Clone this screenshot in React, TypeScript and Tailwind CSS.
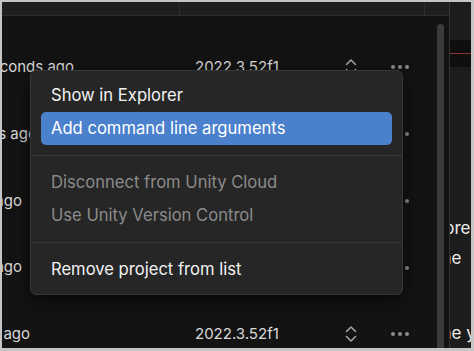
import React from "react";

type Row = {
  time: string;
  timeBox: string;
  version: string;
};

const rows: Row[] = [
  { time: "a few seconds ago", timeBox: "w-[72px]", version: "2022.3.52f1" },
  { time: "2 minutes ago", timeBox: "w-[35px]", version: "2022.3.52f1" },
  { time: "an hour ago", timeBox: "w-[20px]", version: "2022.3.52f1" },
  { time: "2 days ago", timeBox: "w-[20px]", version: "2022.3.52f1" },
  { time: "3 days ago", timeBox: "w-[28px]", version: "2022.3.52f1" },
];

const UpDown = () => (
  <svg width="12" height="18" viewBox="0 0 12 18" fill="none">
    <path
      d="M1.5 6.5 L6 2 L10.5 6.5 M1.5 11.5 L6 16 L10.5 11.5"
      stroke="#a3a3a3"
      strokeWidth="1.6"
      strokeLinecap="round"
      strokeLinejoin="round"
    />
  </svg>
);

const Dots = () => (
  <div className="flex items-center gap-[3px]">
    <span className="w-[4px] h-[4px] rounded-full bg-[#8d8d8d]" />
    <span className="w-[4px] h-[4px] rounded-full bg-[#8d8d8d]" />
    <span className="w-[4px] h-[4px] rounded-full bg-[#8d8d8d]" />
  </div>
);

const MenuItem = ({
  label,
  active,
  disabled,
}: {
  label: string;
  active?: boolean;
  disabled?: boolean;
}) => (
  <div
    className={
      "h-[33px] flex items-center px-[10px] rounded-[5px] text-[16.6px] " +
      (active
        ? "bg-[#4b80cc] text-white"
        : disabled
          ? "text-[#8b8b8b]"
          : "text-[#f2f2f2]")
    }
  >
    {label}
  </div>
);

const ContextMenu = () => (
  <div className="absolute left-[28px] top-[68px] w-[373px] h-[225px] rounded-[6px] border border-[#363636] bg-[#262626] shadow-[0_6px_18px_rgba(0,0,0,0.55)] pt-[8px] pb-[9px]">
    <div className="px-[10px]">
      <MenuItem label="Show in Explorer" />
      <MenuItem label="Add command line arguments" active />
    </div>
    <div className="my-[10px] h-px bg-[#393939]" />
    <div className="px-[10px]">
      <MenuItem label="Disconnect from Unity Cloud" disabled />
      <MenuItem label="Use Unity Version Control" disabled />
    </div>
    <div className="my-[10px] h-px bg-[#393939]" />
    <div className="px-[10px]">
      <MenuItem label="Remove project from list" />
    </div>
  </div>
);

export default function App() {
  return (
    <div
      className="w-[474px] h-[351px] bg-[#c5c5c5] pl-[2px] pt-[2px] pr-[3px] pb-[3px] overflow-hidden"
      style={{ fontFamily: "Inter, 'Noto Sans', sans-serif" }}
    >
      <div className="flex h-full w-full">
        {/* project list */}
        <div className="relative flex flex-col w-[447px] h-full bg-[#131313]">
          <div className="h-[14px] flex border-b border-[#2e2e2e] bg-[#1f1f1f]">
            <div className="w-[178px] border-r border-[#2e2e2e]" />
            <div className="w-[245px] border-r border-[#2e2e2e]" />
            <div className="flex-1" />
          </div>

          <div className="relative flex-1 overflow-hidden pt-[18px]">
            {rows.map((row, i) => (
              <div
                key={i}
                className="h-[66.75px] flex items-center text-[15px] text-[#d9d9d9] whitespace-nowrap"
              >
                <div className="w-[193px]">
                  <div className={"flex justify-end overflow-hidden " + row.timeBox}>
                    <span className="shrink-0">{row.time}</span>
                  </div>
                </div>
                <div className="w-[150px]">{row.version}</div>
                <div className="w-[46px] flex">
                  <UpDown />
                </div>
                <Dots />
              </div>
            ))}

            <div className="absolute right-[5px] top-[8px] bottom-0 w-[7px] rounded-t-full bg-[#3b3b3b]" />
          </div>

          <ContextMenu />
        </div>

        {/* side panel */}
        <div className="flex-1 h-full border-l border-[#343434] bg-[#1c1c1c] overflow-hidden">
          <div className="mt-[38px] h-[27px] bg-[#0f0f0f] flex flex-col justify-center">
            <div className="h-px bg-[#8a3434]" />
          </div>
          <div className="mt-[146px] text-[17px] leading-[30px] text-[#ececec] whitespace-nowrap">
            <div className="ml-[-6px]">press</div>
            <div className="ml-[-14px]">the</div>
            <div className="ml-[-14px] mt-[45px]">the you</div>
          </div>
        </div>
      </div>
    </div>
  );
}
